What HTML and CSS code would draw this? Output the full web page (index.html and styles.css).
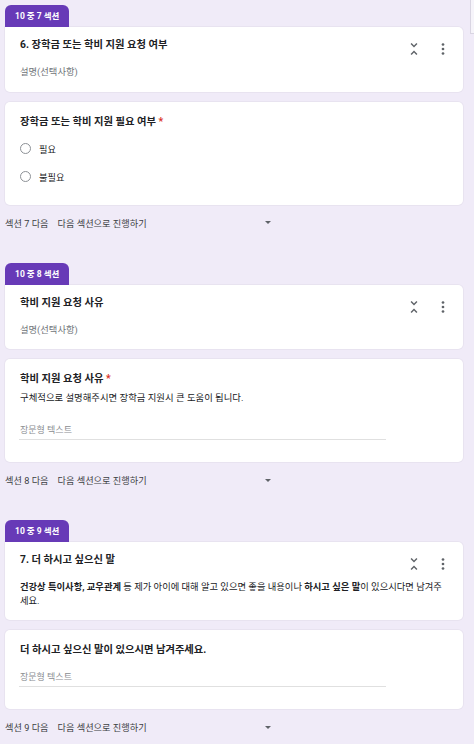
FILE: index.html
```html
<!DOCTYPE html>
<html lang="ko">
<head>
  <meta charset="utf-8">
  <meta name="viewport" content="width=device-width, initial-scale=1.0">
  <title>섹션 편집</title>
  <link rel="stylesheet" href="styles.css">
</head>
<body>
  <div class="side-edge"></div>

  <div class="form">
    <!-- Section 7 -->
    <div class="section">
      <div class="section-tab">10 중 7 섹션</div>
      <div class="card header-card">
        <div class="header-info">
          <div class="header-title">6. 장학금 또는 학비 지원 요청 여부</div>
          <div class="header-desc placeholder">설명(선택사항)</div>
        </div>
        <div class="header-icons">
          <svg class="icon" viewBox="0 0 24 24"><path d="M7.41 18.59L8.83 20 12 16.83 15.17 20l1.41-1.41L12 14l-4.59 4.59zm9.18-13.18L15.17 4 12 7.17 8.83 4 7.41 5.41 12 10l4.59-4.59z"/></svg>
          <svg class="icon" viewBox="0 0 24 24"><circle cx="12" cy="6" r="1.8"/><circle cx="12" cy="12" r="1.8"/><circle cx="12" cy="18" r="1.8"/></svg>
        </div>
      </div>

      <div class="card question-card">
        <div class="question-title">장학금 또는 학비 지원 필요 여부 <span class="required">*</span></div>
        <div class="options">
          <div class="option"><span class="radio"></span>필요</div>
          <div class="option"><span class="radio"></span>불필요</div>
        </div>
      </div>

      <div class="section-next">
        <span>섹션 7 다음</span>
        <div class="next-select">다음 섹션으로 진행하기<span class="caret"></span></div>
      </div>
    </div>

    <!-- Section 8 -->
    <div class="section">
      <div class="section-tab">10 중 8 섹션</div>
      <div class="card header-card">
        <div class="header-info">
          <div class="header-title">학비 지원 요청 사유</div>
          <div class="header-desc placeholder">설명(선택사항)</div>
        </div>
        <div class="header-icons">
          <svg class="icon" viewBox="0 0 24 24"><path d="M7.41 18.59L8.83 20 12 16.83 15.17 20l1.41-1.41L12 14l-4.59 4.59zm9.18-13.18L15.17 4 12 7.17 8.83 4 7.41 5.41 12 10l4.59-4.59z"/></svg>
          <svg class="icon" viewBox="0 0 24 24"><circle cx="12" cy="6" r="1.8"/><circle cx="12" cy="12" r="1.8"/><circle cx="12" cy="18" r="1.8"/></svg>
        </div>
      </div>

      <div class="card question-card">
        <div class="question-title">학비 지원 요청 사유 <span class="required">*</span></div>
        <div class="question-desc">구체적으로 설명해주시면 장학금 지원시 큰 도움이 됩니다.</div>
        <div class="text-field with-desc">장문형 텍스트</div>
      </div>

      <div class="section-next">
        <span>섹션 8 다음</span>
        <div class="next-select">다음 섹션으로 진행하기<span class="caret"></span></div>
      </div>
    </div>

    <!-- Section 9 -->
    <div class="section">
      <div class="section-tab">10 중 9 섹션</div>
      <div class="card header-card">
        <div class="header-info">
          <div class="header-title">7. 더 하시고 싶으신 말</div>
          <div class="header-desc long"><b>건강상 특이사항, 교우관계</b> 등 제가 아이에 대해 알고 있으면 좋을 내용이나 <b>하시고 싶은 말</b>이 있으시다면 남겨주세요.</div>
        </div>
        <div class="header-icons">
          <svg class="icon" viewBox="0 0 24 24"><path d="M7.41 18.59L8.83 20 12 16.83 15.17 20l1.41-1.41L12 14l-4.59 4.59zm9.18-13.18L15.17 4 12 7.17 8.83 4 7.41 5.41 12 10l4.59-4.59z"/></svg>
          <svg class="icon" viewBox="0 0 24 24"><circle cx="12" cy="6" r="1.8"/><circle cx="12" cy="12" r="1.8"/><circle cx="12" cy="18" r="1.8"/></svg>
        </div>
      </div>

      <div class="card question-card">
        <div class="question-title">더 하시고 싶으신 말이 있으시면 남겨주세요.</div>
        <div class="text-field">장문형 텍스트</div>
      </div>

      <div class="section-next">
        <span>섹션 9 다음</span>
        <div class="next-select">다음 섹션으로 진행하기<span class="caret"></span></div>
      </div>
    </div>
  </div>
</body>
</html>
```

FILE: styles.css
```css
/* Page base: lavender form background */
body {
  margin: 0;
  padding: 0;
  font-family: Roboto, "Noto Sans CJK KR", sans-serif;
  background-color: #f0ebf8;
  color: #202124;
}

.form {
  padding: 4px 11px 0 5px;
}

/* floating toolbar edge peeking in at the top right */
.side-edge {
  position: fixed;
  top: 0;
  right: 0;
  width: 3px;
  height: 33px;
  background-color: #f6f4fa;
  border-left: 1px solid #d9d5e2;
  border-bottom: 1px solid #d9d5e2;
}

.section {
  margin-bottom: 21px;
}

/* Purple "10 중 N 섹션" tab */
.section-tab {
  display: inline-block;
  height: 22px;
  line-height: 22px;
  padding: 0 10px;
  font-size: 8.5px;
  font-weight: 700;
  color: #ffffff;
  background-color: #673ab7;
  border-radius: 6px 6px 0 0;
}

.card {
  background-color: #ffffff;
  border-radius: 5px;
  box-shadow: 0 0 0 1px rgba(0, 0, 0, 0.03);
  box-sizing: border-box;
}

/* Section header card */
.header-card {
  display: flex;
  align-items: flex-start;
  padding: 10px 11px 13px 15px;
  border-top-left-radius: 0;
}

.header-info {
  flex: 1;
}

.header-title {
  font-size: 10.3px;
  font-weight: 700;
  line-height: 16px;
}

.header-desc {
  margin-top: 12px;
  font-size: 9.3px;
  line-height: 13.5px;
}

.header-desc.long {
  margin-right: -45px;
  word-break: break-all;
}

.header-desc b {
  font-weight: 700;
}

.placeholder {
  color: #70757a;
}

.header-icons {
  display: flex;
  gap: 11px;
  margin-top: 3px;
  margin-left: 8px;
}

.icon {
  width: 18px;
  height: 18px;
  fill: #5f6368;
}

/* Question card */
.question-card {
  margin-top: 10px;
  padding: 12px 15px 14px;
}

.question-title {
  font-size: 10.3px;
  font-weight: 700;
  line-height: 16px;
}

.required {
  color: #d93025;
}

.question-desc {
  margin-top: 4px;
  font-size: 9.4px;
  line-height: 14px;
}

.options {
  margin-top: 5px;
}

.option {
  display: flex;
  align-items: center;
  height: 28px;
  font-size: 9.2px;
}

.radio {
  width: 11px;
  height: 11px;
  margin-right: 8px;
  border: 1.3px solid #8d9196;
  border-radius: 50%;
  box-sizing: border-box;
}

.text-field {
  width: 366px;
  margin: 12px 0 8px -1px;
  padding: 0 0 2px 1px;
  font-size: 9px;
  line-height: 14px;
  color: #8a8d91;
  border-bottom: 1px solid #e0e0e0;
}

.text-field.with-desc {
  margin-top: 18px;
}

/* "섹션 N 다음" row below each section */
.section-next {
  display: flex;
  align-items: center;
  gap: 9px;
  height: 36px;
  font-size: 9.2px;
  color: #3c4043;
}

.next-select {
  display: flex;
  align-items: center;
  justify-content: space-between;
  width: 215px;
}

.caret {
  width: 0;
  height: 0;
  margin-right: 2px;
  border-left: 3px solid transparent;
  border-right: 3px solid transparent;
  border-top: 3px solid #5f6368;
}
```
